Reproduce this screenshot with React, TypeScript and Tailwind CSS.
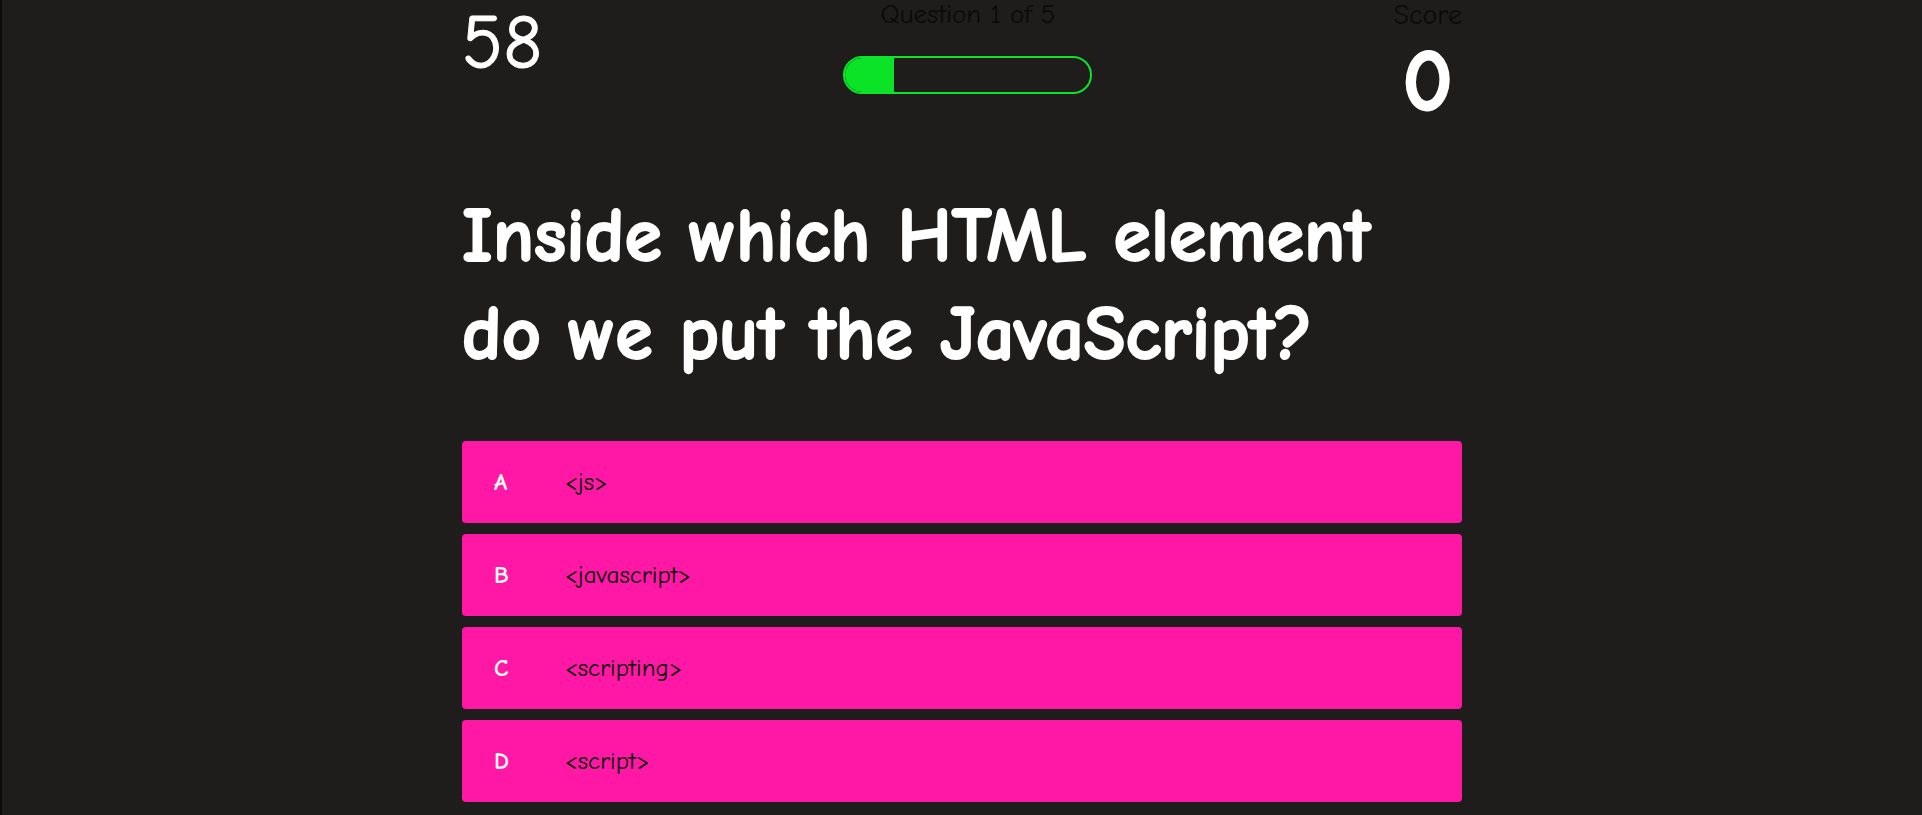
import React from "react";

const options = [
  { key: "A", text: "<js>" },
  { key: "B", text: "<javascript>" },
  { key: "C", text: "<scripting>" },
  { key: "D", text: "<script>" },
];

export default function App() {
  const current = 1;
  const total = 5;
  const progress = (current / total) * 100;

  return (
    <div
      className="min-h-screen w-full bg-[#1e1d1c] border-l-2 border-[#0c0c0c]"
      style={{ fontFamily: '"Comic Sans MS", "Comic Neue", cursive' }}
    >
      <div className="mx-auto w-[1000px]">
        {/* header: timer, progress, score */}
        <div className="flex justify-between items-start">
          <div className="text-white text-[76px] leading-[90px] -mt-[1px] [-webkit-text-stroke:1px_white]">
            58
          </div>
          <div className="flex flex-col items-center">
            <div className="text-[#0a0a0a] text-[27px] leading-[30px]">
              Question {current} of {total}
            </div>
            <div className="mt-[26px] w-[249px] h-[38px] rounded-full border-2 border-[#0ee32b] overflow-hidden">
              <div
                className="h-full bg-[#0be326] rounded-l-full"
                style={{ width: `${progress}%` }}
              />
            </div>
          </div>
          <div className="flex flex-col items-center">
            <div className="text-[#0a0a0a] text-[28px] leading-[30px]">Score</div>
            <div className="text-white font-bold text-[88px] leading-[90px] mt-[7px] [-webkit-text-stroke:2px_white]">
              0
            </div>
          </div>
        </div>

        {/* question */}
        <h1 className="mt-[61px] text-white font-bold text-[76px] leading-[98px] [-webkit-text-stroke:2px_white]">
          Inside which HTML element
          <br />
          do we put the JavaScript?
        </h1>

        {/* answers */}
        <div className="mt-[57px] flex flex-col gap-[11px]">
          {options.map((o) => (
            <button
              key={o.key}
              className="flex items-center h-[82px] w-full rounded-[4px] bg-[#ff17a6] px-[32px] text-left"
            >
              <span className="w-[71px] text-white text-[24px] font-bold">{o.key}</span>
              <span className="text-black text-[25px]">{o.text}</span>
            </button>
          ))}
        </div>
      </div>
    </div>
  );
}
